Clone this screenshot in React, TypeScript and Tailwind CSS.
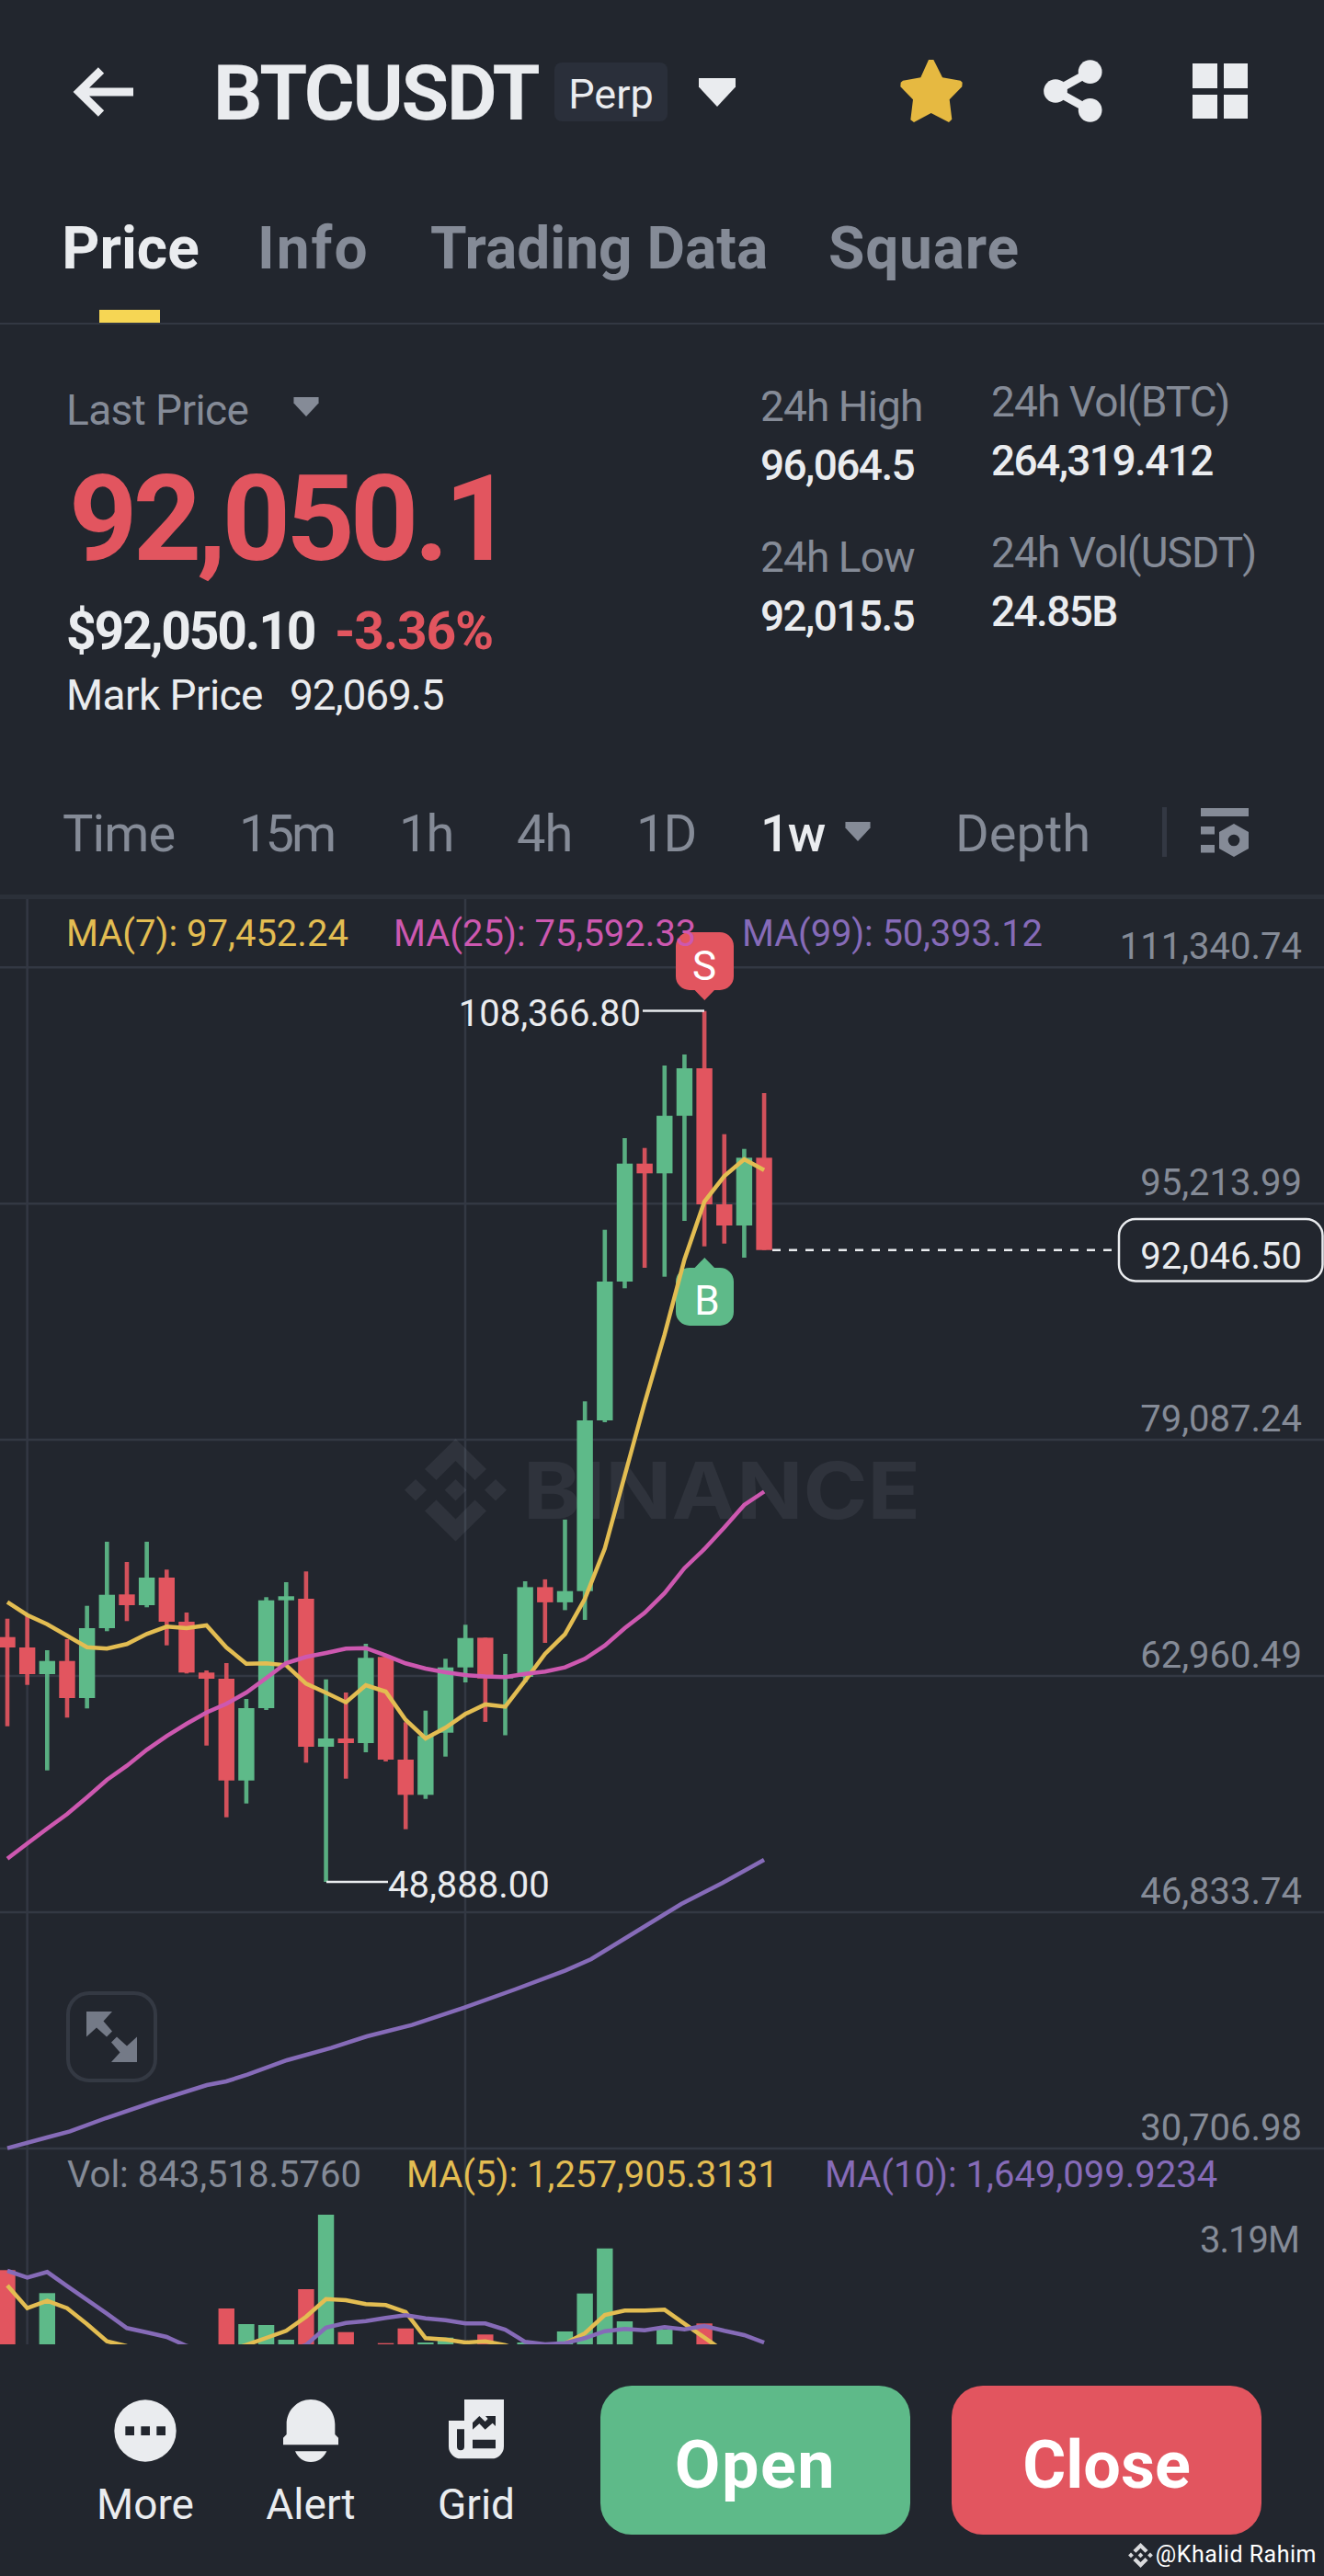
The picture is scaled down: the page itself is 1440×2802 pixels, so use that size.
import type { ReactNode } from "react";
import clsx from "clsx";

const UP = "#5eba89";
const DOWN = "#e2555f";
const YELLOW = "#e3bd52";
const PINK = "#cd58b0";
const PURPLE = "#866bb8";
const GRID = "#333843";
const MUTED = "#858b97";
const LIGHT = "#eaecef";

const STEP = 21.66;
const cx = (i: number) => 8 + i * STEP;

// [up, high, body top, body bottom, low] in chart space
const candles: [number, number, number, number, number][] = [
  [0, 1760.7, 1780.7, 1792, 1877.7],
  [0, 1757, 1792, 1821, 1832.7],
  [1, 1795, 1806.7, 1821, 1925.7],
  [0, 1783, 1806.7, 1847, 1868.3],
  [1, 1746.7, 1771, 1847, 1858.3],
  [1, 1677, 1734.7, 1771, 1774.3],
  [0, 1699, 1734.3, 1746, 1763.3],
  [1, 1677, 1716, 1746, 1748.3],
  [0, 1707.3, 1716, 1764, 1789.7],
  [0, 1754, 1764, 1819.3, 1820.3],
  [0, 1817, 1819.3, 1826, 1898.7],
  [0, 1809, 1826, 1936.7, 1976.7],
  [1, 1848, 1858, 1936.7, 1961.7],
  [1, 1737.3, 1740.7, 1858, 1860],
  [1, 1721, 1736.3, 1740.7, 1808],
  [0, 1709.3, 1739, 1900, 1917.3],
  [1, 1826.7, 1891, 1900, 2047],
  [0, 1841, 1891, 1896, 1934.7],
  [1, 1788, 1803.3, 1896, 1906],
  [0, 1801.3, 1802.3, 1914, 1916],
  [0, 1873.3, 1914, 1952.3, 1989.7],
  [1, 1860.7, 1888.3, 1952.3, 1956.7],
  [1, 1804.3, 1813.7, 1884.7, 1910.7],
  [1, 1767.3, 1781.7, 1813.7, 1830],
  [0, 1781.4, 1781.4, 1825.7, 1872.9],
  [1, 1799, 1823, 1825.7, 1887.5],
  [1, 1720, 1726.4, 1824, 1830],
  [0, 1717.9, 1726.4, 1742.9, 1787],
  [1, 1652.9, 1730.7, 1742.9, 1751.4],
  [1, 1524.3, 1545, 1730.7, 1762],
  [1, 1337.7, 1394, 1545, 1547],
  [1, 1238, 1265.7, 1394, 1401.3],
  [0, 1248.7, 1265.7, 1276.3, 1379],
  [1, 1159, 1213.7, 1276.3, 1388.7],
  [1, 1147, 1162, 1213.7, 1328],
  [0, 1099.7, 1162, 1310, 1355.7],
  [0, 1233.7, 1310, 1333, 1352.7],
  [1, 1249.7, 1259.3, 1333, 1368],
  [0, 1189, 1259.3, 1359.7, 1359.7],
];

const ma7 = [
  1742.7, 1756.7, 1766.7, 1779.3, 1791.7, 1793.3, 1788.3, 1777.3, 1769.3, 1771, 1768, 1792, 1809.7,
  1809.3, 1811.3, 1831.3, 1841.3, 1851.7, 1833, 1840, 1870.7, 1891, 1879.3, 1864.3, 1853.9, 1856.4,
  1828.2, 1799, 1777.5, 1739, 1684.3, 1605, 1526, 1451.7, 1370, 1307, 1279.3, 1261, 1272.7,
];

const ma25 = [
  2021.7, 2005.3, 1989, 1973.3, 1955, 1936, 1920.7, 1903.3, 1888.3, 1875, 1862.7, 1853.3, 1841,
  1825.3, 1809, 1802.3, 1798, 1793.3, 1792.7, 1800.7, 1809.3, 1815, 1819, 1822, 1823.6, 1824.3,
  1820.7, 1818.2, 1813.6, 1804.3, 1790, 1771, 1754.3, 1732.9, 1705.7, 1685, 1661.4, 1637, 1622.5,
];

const ma99 =
  "8,2336.7 51,2325 76,2318.3 115,2304 168,2286 225,2268 246,2264 269,2256.7 312,2241 360,2227.7 399,2215 448,2202.7 506,2183.3 560,2164 615,2143.3 643,2131 692,2101 741,2071 786,2048 831,2023";

const volumes: [number, number, number][] = [
  [0, 0, 2469.3], [2, 1, 2494.3], [11, 0, 2511], [12, 1, 2528], [13, 1, 2529], [14, 1, 2545],
  [15, 0, 2490], [16, 1, 2409], [17, 0, 2536.7], [19, 0, 2548.7], [20, 0, 2532.7], [21, 1, 2548],
  [22, 1, 2542.7], [24, 0, 2539.3], [26, 1, 2548], [28, 1, 2536], [29, 1, 2494.7], [30, 1, 2445.7],
  [31, 1, 2525], [33, 1, 2534], [35, 0, 2527.3],
];

const volMa5 = [
  2486, 2510.7, 2502.7, 2510.7, 2528, 2546.7, 2552, 2556, 2558, 2558, 2558, 2557, 2550.7, 2543,
  2535.3, 2520, 2500.7, 2502, 2506.3, 2507.3, 2515, 2543.3, 2544.7, 2548, 2546.7, 2551, 2558, 2558,
  2549, 2538, 2518, 2513.3, 2513.3, 2512.3, 2527.7, 2542.7, 2558,
];

const volMa10 = [
  2470, 2477.3, 2471.3, 2486.7, 2501.7, 2516.7, 2532.3, 2537, 2542, 2551.7, 2558, 2558, 2558, 2558,
  2558, 2550.7, 2531.7, 2526.7, 2524.7, 2521.3, 2518.3, 2521.7, 2523.7, 2527.3, 2527.3, 2534,
  2547.3, 2550, 2548.7, 2543.3, 2535.7, 2533.3, 2534.7, 2531.3, 2533.7, 2530, 2535.3, 2540, 2548,
];

const axis: [number, string][] = [
  [1052.3, "111,340.74"],
  [1309.3, "95,213.99"],
  [1566, "79,087.24"],
  [1823, "62,960.49"],
  [2080, "46,833.74"],
  [2337, "30,706.98"],
];

const toPoints = (values: number[]) => values.map((y, i) => `${cx(i)},${y}`).join(" ");

function Caret({ className }: { className?: string }) {
  return (
    <svg viewBox="0 0 40 31" className={className} fill="currentColor">
      <path d="M0 0h40v9.5L20 31 0 9.5z" />
    </svg>
  );
}

function BinanceMark() {
  return (
    <g>
      <path d="M55.5 0 89 33 76.5 45 55.5 24 34.5 45 22 33z" />
      <path d="M55.5 111.5 89 78.5 76.5 66.5 55.5 87.5 34.5 66.5 22 78.5z" />
      <path d="m55.5 44 11.8 11.8-11.8 11.8-11.8-11.8z" />
      <path d="m12 44 12 11.8L12 67.6 0 55.8z" />
      <path d="m99 44 12 11.8-12 11.8-12-11.8z" />
    </g>
  );
}

function Header() {
  return (
    <header className="flex h-[200px] items-center pl-[79px] text-[#eaecef]">
      <svg viewBox="0 0 67 54" className="h-[54px] w-[67px]" fill="none" stroke="currentColor" strokeWidth="9">
        <path d="M66 27H8M31 3.5 7 27l24 23.5" />
      </svg>
      <h1 className="mt-1 ml-[86px] w-[371px] text-[84px] leading-none font-bold tracking-[-2.3px] whitespace-nowrap">BTCUSDT</h1>
      <span className="flex h-16 w-[123px] items-center justify-center rounded-lg bg-[#2a2f3a] pt-1 text-[45px] leading-none">
        Perp
      </span>
      <Caret className="ml-[34px] h-[31px] w-10" />
      <svg viewBox="179 44 204 204" className="mt-[-2px] ml-[179px] h-[68px] w-[68px]" fill="#e6b941">
        <path d="M272 44h16l29 58 59 10 6 6-1 14-41 42 8 64-10 10-58-30-56 30-11-8 8-66-41-42 1-14 7-6 58-10z" />
      </svg>
      <svg viewBox="645 44 193 206" className="mt-[-2px] ml-[88px] h-[68px] w-16" fill="currentColor">
        <path d="M798 84 684 147l114 63" fill="none" stroke="currentColor" strokeWidth="27" />
        <circle cx="684" cy="147" r="39" />
        <circle cx="798" cy="84" r="39" />
        <circle cx="798" cy="210" r="39" />
      </svg>
      <div className="mt-[-2px] ml-[98px] grid grid-cols-2 gap-[7px]">
        <i className="size-[26.5px] bg-current" />
        <i className="size-[26.5px] bg-current" />
        <i className="size-[26.5px] bg-current" />
        <i className="size-[26.5px] bg-current" />
      </div>
    </header>
  );
}

function Tabs() {
  return (
    <nav className="flex h-[153px] border-b-2 border-[#333843] pt-[31px] pl-[68px] text-[64px] leading-[80px] font-bold whitespace-nowrap text-[#858b97]">
      <div className="flex w-[145px] flex-col items-center text-[#eaecef]">
        <span className="pl-[3px]">Price</span>
        <span className="mt-[26px] h-[14px] w-[66px] bg-[#f6d654]" />
      </div>
      <span className="ml-[67px] w-[120px] tracking-[2px]">Info</span>
      <span className="ml-[68px] w-[372px]">Trading Data</span>
      <span className="ml-[61px] tracking-[0.8px]">Square</span>
    </nav>
  );
}

function Stat({ label, value }: { label: string; value: string }) {
  return (
    <div className="h-[164px] whitespace-nowrap">
      <div className="text-[46px] leading-[64px] tracking-[-0.9px] text-[#858b97]">{label}</div>
      <div className="text-[46px] leading-[64px] font-medium tracking-[-1.6px]">{value}</div>
    </div>
  );
}

function PricePanel() {
  return (
    <section className="flex h-[477px] pl-[72px] text-[#eaecef]">
      <div className="w-[755px] pt-[63px] whitespace-nowrap">
        <div className="flex items-center text-[46px] leading-[60px] tracking-[-0.6px] text-[#858b97]">
          Last Price
          <Caret className="mt-[-8px] ml-[49px] h-[21px] w-7" />
        </div>
        <div className="mt-[24px] ml-[3px] text-[130px] leading-[130px] font-bold tracking-[-4.9px] text-[#e2555f]">92,050.1</div>
        <div className="mt-[27px] flex text-[57px] leading-[60px] font-bold">
          <span className="w-[292px] tracking-[-2.2px]">$92,050.10</span>
          <span className="tracking-[-1.2px] text-[#e2555f]">-3.36%</span>
        </div>
        <div className="mt-[14px] flex text-[46px] leading-[50px]">
          <span className="w-[243px] tracking-[-0.6px]">Mark Price</span>
          <span className="tracking-[-1.1px]">92,069.5</span>
        </div>
      </div>
      <div className="w-[251px] pt-[57px]">
        <Stat label="24h High" value="96,064.5" />
        <Stat label="24h Low" value="92,015.5" />
      </div>
      <div className="pt-[52px]">
        <Stat label="24h Vol(BTC)" value="264,319.412" />
        <Stat label="24h Vol(USDT)" value="24.85B" />
      </div>
    </section>
  );
}

function Interval({ active, className, children }: { active?: boolean; className: string; children: ReactNode }) {
  return <span className={clsx("shrink-0", active && "font-medium text-[#eaecef]", className)}>{children}</span>;
}

function Intervals() {
  return (
    <div className="flex h-[148px] items-center border-b-[5px] border-[#2b3039] pt-[11px] pl-[68px] text-[56px] whitespace-nowrap text-[#858b97]">
      <Interval className="w-[192px] tracking-[-0.9px]">Time</Interval>
      <Interval className="w-[174px] tracking-[-3px]">15m</Interval>
      <Interval className="w-[128px] tracking-[-2px]">1h</Interval>
      <Interval className="w-[130px] tracking-[-1px]">4h</Interval>
      <Interval className="w-[135px] tracking-[-2px]">1D</Interval>
      <Interval active className="w-[92px] tracking-[-2px]">1w</Interval>
      <Caret className="mt-[-6px] h-[21px] w-7" />
      <Interval className="ml-[92px] w-[225px]">Depth</Interval>
      <span className="mb-1 h-[54px] w-[5px] bg-[#333843]" />
      <svg viewBox="0 0 52 53" className="mb-1 ml-[37px] h-[53px] w-[52px]" fill="currentColor">
        <path d="M0 0h52v9H0zM0 20h15v8.500H0zM0 40h15v8.500H0z" />
        <path fillRule="evenodd" d="m36 17 16 9v18l-16 9-16-9V26zm0 11.700a6.300 6.300 0 1 0 0 12.600 6.300 6.300 0 0 0 0-12.600z" />
      </svg>
    </div>
  );
}

function Chart() {
  return (
    <div className="relative h-[1572px]">
      <svg viewBox="0 978 1440 1572" className="block h-[1572px] w-[1440px] font-[Roboto,sans-serif] text-[40px]">
        <g stroke={GRID} strokeWidth="2.5">
          {axis.map(([y]) => (
            <path key={y} d={`M0 ${y}H1440`} />
          ))}
          <path d="M29.6 978V2550M506 978V2550" />
        </g>

        <g fill="#c5cbdc" opacity="0.08">
          <g transform="translate(440 1565)">
            <BinanceMark />
          </g>
          <text x="569" y="1651.5" fontFamily="Inter, sans-serif" fontWeight="700" fontSize="85" textLength="432" lengthAdjust="spacingAndGlyphs">
            BINANCE
          </text>
        </g>

        {candles.map(([up, high, top, bottom, low], i) => (
          <g key={i} fill={up ? UP : DOWN}>
            <rect x={cx(i) - 2.3} y={high} width="4.6" height={low - high} opacity="0.92" />
            <rect x={cx(i) - 8.7} y={top} width="17.4" height={bottom - top} />
          </g>
        ))}

        <path d="M750 1014h33a15 15 0 0 1 15 15v33a15 15 0 0 1-15 15h-6l-10.7 11-10.7-11H750a15 15 0 0 1-15-15v-33a15 15 0 0 1 15-15z" fill={DOWN} />
        <path d="M750 1442h33a15 15 0 0 0 15-15v-33a15 15 0 0 0-15-15h-6l-10.7-11-10.7 11H750a15 15 0 0 0-15 15v33a15 15 0 0 0 15 15z" fill={UP} />
        <g fill="#fff" textAnchor="middle" fontSize="44">
          <text x="766" y="1066">S</text>
          <text x="769" y="1430">B</text>
        </g>

        <g fill="none" strokeWidth="4.5">
          <polyline points={toPoints(ma7)} stroke={YELLOW} />
          <polyline points={toPoints(ma25)} stroke={PINK} />
          <polyline points={ma99} stroke={PURPLE} />
        </g>

        <g stroke={LIGHT} strokeWidth="2.5">
          <path d="M699 1099.5H766" />
          <path d="M355 2047H422" />
          <path d="M840 1359.7H1213" strokeDasharray="9 9" />
        </g>
        <g fill={LIGHT}>
          <text x="697" y="1116" textAnchor="end">108,366.80</text>
          <text x="422" y="2064">48,888.00</text>
        </g>

        {volumes.map(([i, up, y]) => (
          <rect key={i} x={cx(i) - 8.7} y={y} width="17.4" height={2550 - y} fill={up ? UP : DOWN} />
        ))}
        <g fill="none" strokeWidth="4.5">
          <polyline points={toPoints(volMa5)} stroke={YELLOW} />
          <polyline points={toPoints(volMa10)} stroke={PURPLE} />
        </g>

        <text x="72" y="1029" fill={YELLOW}>MA(7): 97,452.24</text>
        <text x="428" y="1029" fill={PINK}>MA(25): 75,592.33</text>
        <text x="807" y="1029" fill={PURPLE} textLength="327">MA(99): 50,393.12</text>
        <text x="73" y="2379" fill={MUTED}>Vol: 843,518.5760</text>
        <text x="442" y="2379" fill={YELLOW}>MA(5): 1,257,905.3131</text>
        <text x="897" y="2379" fill={PURPLE}>MA(10): 1,649,099.9234</text>

        <g fill={MUTED} textAnchor="end">
          {axis.map(([y, label]) => (
            <text key={label} x="1416" y={y - 9}>{label}</text>
          ))}
          <text x="1413" y="2450" letterSpacing="-1">3.19M</text>
        </g>

        <rect x="1217" y="1326" width="221.500" height="67.500" rx="18" fill="#22262e" stroke={LIGHT} strokeWidth="2.5" />
        <text x="1416" y="1380" textAnchor="end" fill={LIGHT}>92,046.50</text>
      </svg>

      <button className="absolute top-[1188px] left-[72px] flex size-[99px] items-center justify-center rounded-[25px] border-4 border-[#343943] bg-[#22262e]">
        <svg viewBox="0 0 55 55" className="size-[55px] fill-[#747a87]">
          <path d="M0 0h28l-9.5 10.5 9.5 11-6 6-11-10L0 27.5z" />
          <path d="M55 55H27l9.5-10.5-9.5-11 6-6 11 10L55 27.5z" />
        </svg>
      </button>
    </div>
  );
}

function Action({ label, className, children }: { label: string; className: string; children: ReactNode }) {
  return (
    <button className={clsx("flex shrink-0 flex-col items-center", className)}>
      {children}
      <span className="mt-[19px] text-[46px] leading-[54px]">{label}</span>
    </button>
  );
}

function Footer() {
  return (
    <footer className="relative flex h-[252px] pt-[45px] pl-[98px] text-[#eaecef]">
      <div className="flex pt-[15px]">
        <Action label="More" className="w-[120px]">
          <svg viewBox="72 44 204 204" className="size-[68px]" fill="currentColor">
            <circle cx="174" cy="146" r="101" />
            <path d="M109 132h29v29h-29zM160 132h29v29h-29zM211 132h29v29h-29z" fill="#22262e" />
          </svg>
        </Action>
        <Action label="Alert" className="ml-[60px] w-[120px]">
          <svg viewBox="624 44 180 204" className="h-[68px] w-[60px]" fill="currentColor">
            <path d="M635 158v-33c0-45 35-81 79-81s79 36 79 81v33l11 11v23H624v-23z" />
            <path d="M663 213h103c-11 23-28 35-52 35s-41-12-51-35z" />
          </svg>
        </Action>
        <Action label="Grid" className="ml-[60px] w-[120px]">
          <svg viewBox="1164 44 180 204" className="h-[68px] w-[60px]" fill="currentColor">
            <path
              fillRule="evenodd"
              d="M1215 44h129v153a40 40 0 0 1-40 40h-100a40 40 0 0 1-40-40v-84h51zM1191 141h24v57a12 12 0 0 1-24 0zM1242 175h75v29h-75zM1242 120l22-22 19 18 9-9-8-9h33v33l-10-10-24 21-19-19-22 19z"
            />
          </svg>
        </Action>
      </div>
      <button className="ml-[75px] h-[162px] w-[337px] rounded-[34px] bg-[#5eba89] pt-3 text-[72px] font-bold tracking-[1.5px] text-white">
        Open
      </button>
      <button className="ml-[45px] h-[162px] w-[337px] rounded-[34px] bg-[#e2555f] pt-3 text-[72px] font-bold text-white">
        Close
      </button>

      <div className="absolute right-[8px] bottom-[8px] flex items-center gap-[3px] text-[25px] leading-[30px] whitespace-nowrap text-white">
        <svg viewBox="0 0 111 112" className="size-[27px]" fill="#d9dadd">
          <BinanceMark />
        </svg>
        <span className="tracking-[0.5px]">@Khalid Rahim</span>
      </div>
    </footer>
  );
}

export default function App() {
  return (
    <main className="w-[1440px] overflow-hidden bg-[#22262e] font-[Roboto,sans-serif]">
      <Header />
      <Tabs />
      <PricePanel />
      <Intervals />
      <Chart />
      <Footer />
    </main>
  );
}
